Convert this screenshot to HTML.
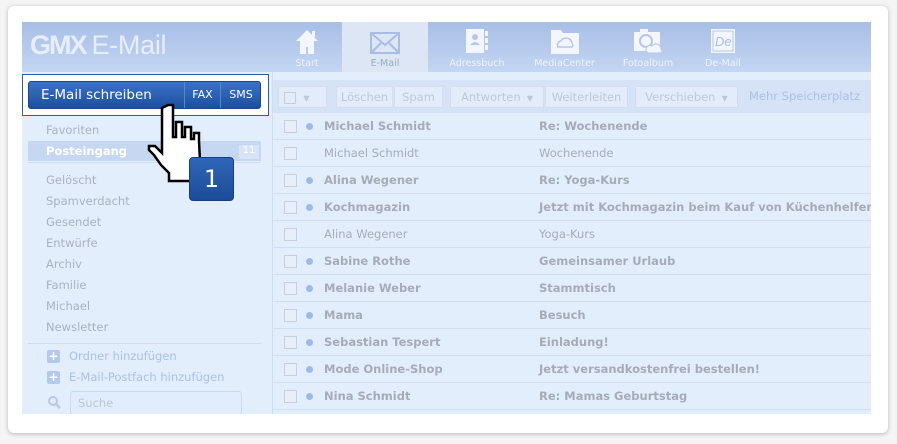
<!DOCTYPE html><html><head><style>
*{margin:0;padding:0;box-sizing:border-box}
body{width:897px;height:444px;background:#f4f4f4;font-family:"DejaVu Sans",Verdana,sans-serif;position:relative;overflow:hidden}
.card{position:absolute;left:8px;top:6px;width:880px;height:427px;background:#fff;border-radius:6px;box-shadow:0 1px 4px rgba(0,0,0,.25)}
.app{position:absolute;left:22px;top:22px;width:849px;height:392px;background:#e3eefc;overflow:hidden}
.hdr{position:absolute;left:0;top:0;width:849px;height:50px;background:linear-gradient(#a7bee6,#c3d6f2)}
.logo{position:absolute;left:8px;top:8px;color:#e8eef9;font-family:"Liberation Sans",sans-serif;font-size:27px;letter-spacing:-.3px}
.logo b{font-weight:900;letter-spacing:-2px;margin-right:6px}
.tab{position:absolute;top:0;height:50px;text-align:center;font-size:9.5px;color:#eef3fb}
.tab span{position:absolute;bottom:3px;left:0;right:0}
.act{background:#dce6f4;color:#9aaac4}
.side{position:absolute;left:0;top:50px;width:249px;height:342px}
.it{position:absolute;left:24px;font-size:11.5px;color:#a9b2c2}
.list{position:absolute;left:250px;top:50px;width:599px;height:342px;border-left:1px solid #d0ddef}
.tb{position:absolute;left:0;top:8px;width:599px;height:33px;background:#d6e3f6}
.btn{position:absolute;top:6px;height:22px;background:#e3ecfa;border:1px solid #d3def0;font-size:11.5px;color:#bcc8da;padding:3px 0;text-align:center;white-space:nowrap}
.row{position:absolute;left:0;width:599px;height:27px;border-bottom:1px solid #d2dff2;font-size:11.5px;color:#a5acb8}
.row .cb{position:absolute;left:11px;top:7px;width:13px;height:13px;border:1px solid #c6cfdb;background:#e9eff8}
.row .dot{position:absolute;left:33px;top:10px;width:7px;height:7px;border-radius:50%;background:#9dbaea}
.row .n{position:absolute;left:51px;top:6px}
.row .s{position:absolute;left:266px;top:6px;white-space:nowrap}
.row.b .n,.row.b .s{font-weight:bold}
</style></head><body>
<div class="card"></div>
<div class="app">
 <div class="hdr">
  <div class="logo"><b>GMX</b>E-Mail</div>
  <div class="tab" style="left:262px;width:46px"><svg width="26" height="28" viewBox="0 0 26 28" style="margin-top:6px"><path d="M13 2L2 13h4v13h6v-7h2v7h6V13h4z" fill="#f3f6fc"/><rect x="18" y="3" width="3" height="6" fill="#f3f6fc"/></svg><span>Start</span></div>
  <div class="tab act" style="left:320px;width:86px"><svg width="30" height="22" viewBox="0 0 30 22" style="margin-top:10px"><rect x="1" y="1" width="28" height="20" fill="none" stroke="#a8bde4" stroke-width="2"/><path d="M1 1l14 12L29 1M1 21l10-10M29 21L19 11" fill="none" stroke="#a8bde4" stroke-width="2"/></svg><span>E-Mail</span></div>
  <div class="tab" style="left:420px;width:70px"><svg width="24" height="26" viewBox="0 0 24 26" style="margin-top:6px"><rect x="1" y="1" width="18" height="24" fill="#f3f6fc"/><rect x="20" y="3" width="3" height="5" fill="#f3f6fc"/><rect x="20" y="10" width="3" height="5" fill="#f3f6fc"/><rect x="20" y="17" width="3" height="5" fill="#f3f6fc"/><circle cx="10" cy="9" r="3" fill="#b5c8ea"/><path d="M5 17q5-6 10 0z" fill="#b5c8ea"/></svg><span>Adressbuch</span></div>
  <div class="tab" style="left:505px;width:75px"><svg width="28" height="24" viewBox="0 0 28 24" style="margin-top:8px"><path d="M0 0h10l2 3h16v21H0z" fill="#f3f6fc"/><path d="M7 17a4 4 0 0 1 3-6a6 6 0 0 1 11 2a3 3 0 0 1 0 4z" fill="none" stroke="#b5c8ea" stroke-width="1.5"/></svg><span>MediaCenter</span></div>
  <div class="tab" style="left:592px;width:68px"><svg width="28" height="26" viewBox="0 0 28 26" style="margin-top:6px"><rect x="0" y="4" width="26" height="19" fill="#f3f6fc"/><rect x="6" y="1" width="8" height="4" fill="#f3f6fc"/><circle cx="12" cy="13" r="6" fill="none" stroke="#b5c8ea" stroke-width="2"/><path d="M14 25a4 4 0 0 1 4-7a5 5 0 0 1 9 3a3 3 0 0 1 0 4z" fill="#f3f6fc" stroke="#b5c8ea"/></svg><span>Fotoalbum</span></div>
  <div class="tab" style="left:670px;width:62px"><svg width="26" height="26" viewBox="0 0 26 26" style="margin-top:6px"><rect x="1" y="1" width="24" height="24" fill="#f3f6fc"/><rect x="3" y="3" width="20" height="20" fill="none" stroke="#b5c8ea"/><text x="5" y="18" font-size="13" font-style="italic" font-family="Liberation Sans" fill="#a8bde4">De</text></svg><span>De-Mail</span></div>
 </div>
 <div class="side">
  <div class="it" style="top:51px">Favoriten</div>
  <div style="position:absolute;left:6px;top:69px;width:233px;height:20px;background:#c5d7f1"></div>
  <div class="it" style="top:72px;color:#fff;font-weight:bold">Posteingang</div>
  <div style="position:absolute;left:217px;top:73px;width:20px;height:14px;background:#d8e4f5;color:#fff;font-size:10px;text-align:center">11</div>
  <div style="position:absolute;left:6px;top:90px;width:233px;border-top:1px solid #d0ddef"></div>
  <div class="it" style="top:101px">Gelöscht</div>
  <div class="it" style="top:122px">Spamverdacht</div>
  <div class="it" style="top:143px">Gesendet</div>
  <div class="it" style="top:164px">Entwürfe</div>
  <div class="it" style="top:185px">Archiv</div>
  <div class="it" style="top:206px">Familie</div>
  <div class="it" style="top:227px">Michael</div>
  <div class="it" style="top:248px">Newsletter</div>
  <div style="position:absolute;left:6px;top:271px;width:233px;border-top:1px solid #d0ddef"></div>
  <div style="position:absolute;left:25px;top:278px;width:13px;height:13px;background:#b5c9ee;border-radius:2px;color:#fff;font-size:12px;line-height:12px;text-align:center;font-weight:bold">+</div>
  <div class="it" style="top:277px;left:47px;color:#a9c0ea">Ordner hinzufügen</div>
  <div style="position:absolute;left:25px;top:299px;width:13px;height:13px;background:#b5c9ee;border-radius:2px;color:#fff;font-size:12px;line-height:12px;text-align:center;font-weight:bold">+</div>
  <div class="it" style="top:298px;left:47px;color:#a9c0ea">E-Mail-Postfach hinzufügen</div>
  <svg style="position:absolute;left:25px;top:323px" width="14" height="14"><circle cx="6" cy="6" r="4" fill="none" stroke="#b5c9ee" stroke-width="2"/><path d="M9 9l4 4" stroke="#b5c9ee" stroke-width="2.5"/></svg>
  <div style="position:absolute;left:48px;top:319px;width:172px;height:24px;border:1px solid #c9daf3;border-radius:3px;background:#e1ecfd;font-size:11.5px;color:#bcc6d6;padding:4px 7px">Suche</div>
 </div>
 <div class="list">
  <div class="tb">
   <div class="btn" style="left:5px;width:49px;text-align:left;padding-left:5px"><span style="display:inline-block;width:12px;height:12px;border:1px solid #c6cfdb;vertical-align:middle"></span> &nbsp;<span style="font-size:8px">▼</span></div>
   <div class="btn" style="left:63px;width:57px">Löschen</div>
   <div class="btn" style="left:121px;width:49px">Spam</div>
   <div class="btn" style="left:177px;width:94px">Antworten <span style="font-size:8px">&nbsp;▼</span></div>
   <div class="btn" style="left:272px;width:83px">Weiterleiten</div>
   <div class="btn" style="left:362px;width:103px">Verschieben <span style="font-size:8px">&nbsp;▼</span></div>
   <div style="position:absolute;left:476px;top:9px;font-size:11.5px;color:#a9c0ea">Mehr Speicherplatz</div>
  </div>
  <div class="row b" style="top:41px"><div class="cb"></div><div class="dot"></div><div class="n">Michael Schmidt</div><div class="s">Re: Wochenende</div></div>
  <div class="row" style="top:68px"><div class="cb"></div><div class="n">Michael Schmidt</div><div class="s">Wochenende</div></div>
  <div class="row b" style="top:95px"><div class="cb"></div><div class="dot"></div><div class="n">Alina Wegener</div><div class="s">Re: Yoga-Kurs</div></div>
  <div class="row b" style="top:122px"><div class="cb"></div><div class="dot"></div><div class="n">Kochmagazin</div><div class="s">Jetzt mit Kochmagazin beim Kauf von Küchenhelfern</div></div>
  <div class="row" style="top:149px"><div class="cb"></div><div class="n">Alina Wegener</div><div class="s">Yoga-Kurs</div></div>
  <div class="row b" style="top:176px"><div class="cb"></div><div class="dot"></div><div class="n">Sabine Rothe</div><div class="s">Gemeinsamer Urlaub</div></div>
  <div class="row b" style="top:203px"><div class="cb"></div><div class="dot"></div><div class="n">Melanie Weber</div><div class="s">Stammtisch</div></div>
  <div class="row b" style="top:230px"><div class="cb"></div><div class="dot"></div><div class="n">Mama</div><div class="s">Besuch</div></div>
  <div class="row b" style="top:257px"><div class="cb"></div><div class="dot"></div><div class="n">Sebastian Tespert</div><div class="s">Einladung!</div></div>
  <div class="row b" style="top:284px"><div class="cb"></div><div class="dot"></div><div class="n">Mode Online-Shop</div><div class="s">Jetzt versandkostenfrei bestellen!</div></div>
  <div class="row b" style="top:311px"><div class="cb"></div><div class="dot"></div><div class="n">Nina Schmidt</div><div class="s">Re: Mamas Geburtstag</div></div>
 </div>
</div>
<div style="position:absolute;left:22px;top:74px;width:247px;height:42px;background:#fff;border:1px solid #2a5ca8"></div>
<div style="position:absolute;left:28px;top:81px;width:233px;height:28px;border-radius:3px;background:linear-gradient(#3a72c8,#1d4f9f);border:1px solid #1a4590;color:#fff">
 <div style="position:absolute;left:12px;top:5px;font-size:13.5px">E-Mail schreiben</div>
 <div style="position:absolute;left:155px;top:0;height:26px;border-left:1px solid #5a86cc;width:36px;font-size:11px;text-align:center;line-height:26px">FAX</div>
 <div style="position:absolute;left:191px;top:0;height:26px;border-left:1px solid #5a86cc;width:41px;font-size:11px;text-align:center;line-height:26px">SMS</div>
</div>
<svg style="position:absolute;left:145px;top:100px" width="70" height="90" viewBox="0 0 70 90">
<path d="M23 5h5v32h3V22h6v15h3V27h6v12h3V33h5v8l1 20l-5 10v10H24v-8l-8-8l-7-10l-5-5v-4h6l7 7V8z" fill="#fff" stroke="#000" stroke-width="2.5" stroke-linejoin="miter"/>
</svg>
<div style="position:absolute;left:189px;top:157px;width:45px;height:44px;background:linear-gradient(#2f66b8,#1c4c99);border:1px solid #173f80;border-radius:4px;color:#fff;font-size:24px;text-align:center;line-height:42px">1</div>
</body></html>
